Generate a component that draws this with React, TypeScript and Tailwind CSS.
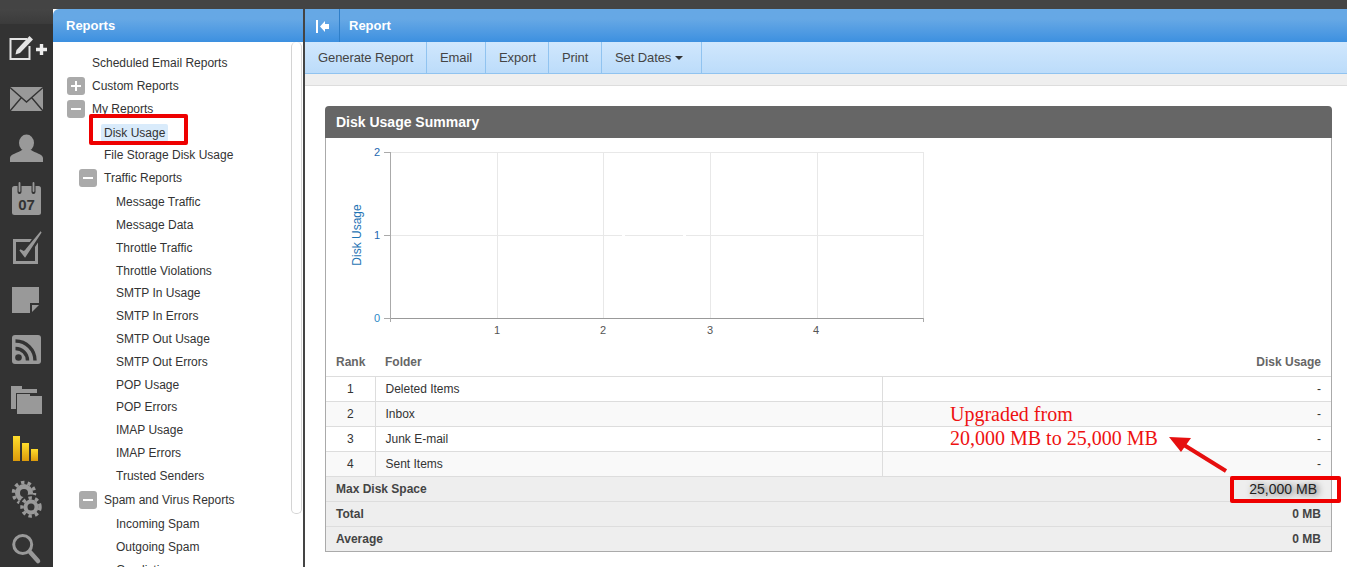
const railBg = "#333333";
const iconGray = "#999999";

const reportTree = [
  { label: "Scheduled Email Reports", level: 0 },
  { label: "Custom Reports", level: 0, toggle: "plus" },
  { label: "My Reports", level: 0, toggle: "minus" },
  { label: "Disk Usage", level: 1, active: true },
  { label: "File Storage Disk Usage", level: 1 },
  { label: "Traffic Reports", level: 1, toggle: "minus", gap: "mt-[1px]" },
  { label: "Message Traffic", level: 2, gap: "mt-[1px]" },
  { label: "Message Data", level: 2 },
  { label: "Throttle Traffic", level: 2 },
  { label: "Throttle Violations", level: 2 },
  { label: "SMTP In Usage", level: 2 },
  { label: "SMTP In Errors", level: 2 },
  { label: "SMTP Out Usage", level: 2 },
  { label: "SMTP Out Errors", level: 2 },
  { label: "POP Usage", level: 2 },
  { label: "POP Errors", level: 2 },
  { label: "IMAP Usage", level: 2 },
  { label: "IMAP Errors", level: 2 },
  { label: "Trusted Senders", level: 2 },
  { label: "Spam and Virus Reports", level: 1, toggle: "minus", gap: "mt-[1px]" },
  { label: "Incoming Spam", level: 2, gap: "mt-[2px]" },
  { label: "Outgoing Spam", level: 2 },
  { label: "Greylisting", level: 2 },
];

const levelClass = ["pl-[14px]", "pl-[26px]", "pl-[38px]"];

const toolbarItems = [
  { label: "Generate Report", width: "w-[122px]" },
  { label: "Email", width: "w-[59px]" },
  { label: "Export", width: "w-[63px]" },
  { label: "Print", width: "w-[53px]" },
  { label: "Set Dates", width: "w-[100px]", caret: true },
];

const folders = ["Deleted Items", "Inbox", "Junk E-mail", "Sent Items"];

function Slot({ children }: { children: React.ReactNode }) {
  return (
    <svg width="53" height="50" viewBox="0 0 53 50" className="block shrink-0">
      {children}
    </svg>
  );
}

function Gear({ x, y, r, hole }: { x: number; y: number; r: number; hole: number }) {
  return (
    <g>
      <circle cx={x} cy={y} r={r + 1.5} fill="none" stroke={iconGray} strokeWidth="3.5" strokeDasharray="3.4 3.2" />
      <circle cx={x} cy={y} r={r} fill={iconGray} />
      <circle cx={x} cy={y} r={hole} fill={railBg} />
    </g>
  );
}

function IconRail() {
  return (
    <div className="flex w-[53px] shrink-0 flex-col bg-[#333333]">
      <div className="h-[15px] shrink-0 bg-gradient-to-b from-[#454545] to-[#3b3b3b]" />
      <Slot>
        <path d="M27 15H10.5V35H29.5V22" fill="none" stroke="#e4e4e4" strokeWidth="2" />
        <path d="M29.5 12L33 15.5L20 29L15.5 30.5L16.5 26Z" fill="#e4e4e4" />
        <path d="M36 25.5H47M41.5 20V31" stroke="#eeeeee" strokeWidth="3.4" />
      </Slot>
      <Slot>
        <rect x="10" y="13" width="33" height="24" fill={iconGray} />
        <path d="M10 13.5L26.5 28L43 13.5M10 37L21 24M43 37L32 24" fill="none" stroke={railBg} strokeWidth="1.4" />
      </Slot>
      <Slot>
        <ellipse cx="26.5" cy="19" rx="7.5" ry="8.5" fill={iconGray} />
        <path d="M10 38V34C10 30 18 29 22 26H31C35 29 43 30 43 34V38Z" fill={iconGray} />
      </Slot>
      <Slot>
        <rect x="12" y="12" width="29" height="29" rx="2.5" fill={iconGray} />
        <path d="M19.5 9V18M33.5 9V18" stroke={railBg} strokeWidth="4" strokeLinecap="round" />
        <path d="M19.5 9V17M33.5 9V17" stroke={iconGray} strokeWidth="1.8" strokeLinecap="round" />
        <text x="26.5" y="36" textAnchor="middle" fontSize="15" fontWeight="700" fill={railBg}>
          07
        </text>
      </Slot>
      <Slot>
        <rect x="14.5" y="16.5" width="22" height="22" fill="none" stroke={iconGray} strokeWidth="3" />
        <path d="M21 26L25.5 31L40 9" fill="none" stroke={railBg} strokeWidth="7" />
        <path d="M20 26L25 32.5L41 8L26 26L24 28Z" fill={iconGray} stroke={iconGray} strokeWidth="1.5" />
      </Slot>
      <Slot>
        <path d="M12 13H39V29H30V39H12Z" fill={iconGray} />
        <path d="M32 31H39L32 38Z" fill={iconGray} />
      </Slot>
      <Slot>
        <rect x="12" y="11" width="29" height="29" rx="3" fill={iconGray} />
        <circle cx="18.5" cy="33.5" r="3.3" fill={railBg} />
        <path d="M15.5 24.5A12 12 0 0 1 27.5 36.5M15.5 17A19.5 19.5 0 0 1 35 36.5" fill="none" stroke={railBg} strokeWidth="3.4" />
      </Slot>
      <Slot>
        <path d="M11 12H22V15H37V19H16V35H11Z" fill={iconGray} />
        <path d="M17 20H30V22H42V40H17Z" fill={iconGray} />
      </Slot>
      <Slot>
        <defs>
          <linearGradient id="barFill" x1="0" y1="0" x2="0" y2="1">
            <stop offset="0" stopColor="#ffdd2c" />
            <stop offset="1" stopColor="#dc9a0b" />
          </linearGradient>
        </defs>
        <rect x="13" y="12" width="7" height="25" fill="url(#barFill)" />
        <rect x="22" y="19" width="7" height="18" fill="url(#barFill)" />
        <rect x="31" y="25" width="7" height="12" fill="url(#barFill)" />
      </Slot>
      <Slot>
        <Gear x={24} y={19} r={9} hole={4} />
        <circle cx="31" cy="33" r="12.5" fill={railBg} />
        <Gear x={31} y={33} r={7.5} hole={3.5} />
      </Slot>
      <Slot>
        <circle cx="22.7" cy="20.5" r="9" fill="none" stroke={iconGray} strokeWidth="3" />
        <path d="M30 28L38 37" stroke={iconGray} strokeWidth="4.5" strokeLinecap="round" />
      </Slot>
    </div>
  );
}

function Toggle({ kind }: { kind?: string }) {
  if (!kind) return <span className="mr-[7px] w-[18px] shrink-0" />;
  return (
    <span className="relative mr-[7px] h-[18px] w-[18px] shrink-0 rounded-[3px] bg-[#aaaaaa]">
      <span className="absolute left-[4px] top-[8px] h-[2px] w-[10px] bg-white" />
      {kind === "plus" ? <span className="absolute left-[8px] top-[4px] h-[10px] w-[2px] bg-white" /> : null}
    </span>
  );
}

function ReportsPanel() {
  return (
    <div className="relative flex w-[250px] shrink-0 flex-col overflow-hidden bg-white">
      <div className="flex h-[33px] shrink-0 items-center rounded-tl-[6px] bg-gradient-to-b from-[#66a8e5] from-30% to-[#3c90e0] pl-[13px] text-[13px] font-bold text-white">
        Reports
      </div>
      <div className="pt-[10px]">
        {reportTree.map((item) => (
          <div
            key={item.label}
            className={`flex h-[22.8px] items-center text-xs text-[#333333] ${levelClass[item.level]} ${item.gap ?? ""} ${item.active ? "pt-[2px]" : ""}`}
          >
            <Toggle kind={item.toggle} />
            {item.active ? (
              <span className="-mx-[3px] rounded-[2px] bg-[#d9ebfb] px-[3px] py-[2px] leading-[14px]">{item.label}</span>
            ) : (
              <span>{item.label}</span>
            )}
          </div>
        ))}
      </div>
      <div className="absolute right-[1px] top-[33px] h-[472px] w-[11px] rounded-[5px] border-x border-b border-[#d4d4d4] bg-white" />
    </div>
  );
}

function DiskChart() {
  const grid = [497.5, 603.5, 710.5, 817.5, 923.5];
  const labels = [
    { x: 497, text: "1" },
    { x: 603, text: "2" },
    { x: 710, text: "3" },
    { x: 816, text: "4" },
  ];
  return (
    <svg width="1005" height="212" viewBox="326 138 1005 212" className="block">
      {grid.map((x) => (
        <path key={x} d={`M${x} 152V318`} stroke="#e8e8e8" />
      ))}
      <path d="M390.5 152.5H923.5M390.5 235.5H923.5" stroke="#e8e8e8" />
      <path d="M622 235.5H625M683 235.5H686" stroke="#ffffff" />
      <path d="M390.5 152V318" stroke="#aaaaaa" />
      <path d="M384 152.5H390M384 235.5H390M384 318.5H390" stroke="#aaaaaa" />
      <path d="M390 318.5H923.5" stroke="#999999" />
      <path d="M923.5 318V322M390.5 318V322" stroke="#aaaaaa" />
      <text x="380" y="156" textAnchor="end" fontSize="11" fill="#2468b0">2</text>
      <text x="380" y="239" textAnchor="end" fontSize="11" fill="#2468b0">1</text>
      <text x="380" y="322" textAnchor="end" fontSize="11" fill="#2b88c8">0</text>
      {labels.map((l) => (
        <text key={l.text} x={l.x} y="334" textAnchor="middle" fontSize="11" fill="#555555">
          {l.text}
        </text>
      ))}
      <text transform="translate(361 235) rotate(-90)" textAnchor="middle" fontSize="12" fill="#1f74b4">
        Disk Usage
      </text>
    </svg>
  );
}

function SummaryCard() {
  return (
    <div className="w-[1007px]">
      <div className="flex h-[32px] items-center rounded-t-[4px] bg-[#666666] pl-[11px] text-sm font-bold text-white">
        Disk Usage Summary
      </div>
      <div className="border-x border-b border-[#aaaaaa]">
        <DiskChart />
        <table className="w-full table-fixed border-collapse text-xs">
          <colgroup>
            <col className="w-[49px]" />
            <col className="w-[507px]" />
            <col />
          </colgroup>
          <thead>
            <tr className="h-[26px] text-[#666666]">
              <th className="pb-[2px] pl-[10px] text-left font-bold">Rank</th>
              <th className="pb-[2px] pl-[10px] text-left font-bold">Folder</th>
              <th className="pb-[2px] pr-[10px] text-right font-bold">Disk Usage</th>
            </tr>
          </thead>
          <tbody className="text-[#333333]">
            {folders.map((name, i) => (
              <tr key={name} className={`h-[25px] border-t border-[#dddddd] ${i % 2 ? "bg-[#f9f9f9]" : "bg-white"}`}>
                <td className="border-r border-[#dddddd] text-center">{i + 1}</td>
                <td className="border-r border-[#dddddd] pl-[10px]">{name}</td>
                <td className="pr-[10px] text-right">-</td>
              </tr>
            ))}
            <tr className="h-[25px] border-t border-[#dddddd] bg-[#eeeeee]">
              <td colSpan={2} className="pl-[10px] font-bold text-[#444444]">Max Disk Space</td>
              <td className="pr-[14px] text-right text-sm text-[#222222] [text-shadow:2px_1px_6px_#444444]">25,000 MB</td>
            </tr>
            <tr className="h-[25px] border-t border-[#dddddd] bg-[#eeeeee] font-bold text-[#444444]">
              <td colSpan={2} className="pl-[10px]">Total</td>
              <td className="pr-[10px] text-right">0 MB</td>
            </tr>
            <tr className="h-[25px] border-t border-[#dddddd] bg-[#eeeeee] font-bold text-[#444444]">
              <td colSpan={2} className="pl-[10px]">Average</td>
              <td className="pr-[10px] text-right">0 MB</td>
            </tr>
          </tbody>
        </table>
      </div>
    </div>
  );
}

function ReportPane() {
  return (
    <div className="flex min-w-0 flex-1 flex-col bg-white">
      <div className="flex h-[33px] shrink-0 items-center bg-gradient-to-b from-[#66a8e5] from-30% to-[#3c90e0] text-[13px] font-bold text-white">
        <div className="flex h-full w-[35px] items-center border-r border-[#2f7fc9] pl-[11px]">
          <svg width="14" height="14" viewBox="0 0 14 14">
            <path d="M0 1H2V14H0ZM4 7.5L9 2V5H13V10H9V13Z" fill="#ffffff" />
          </svg>
        </div>
        <span className="pl-[9px]">Report</span>
      </div>
      <div className="flex h-[32px] shrink-0 border-b border-[#90c3f0] bg-gradient-to-b from-[#d0e7fd] to-[#bcdcfa]">
        {toolbarItems.map((item) => (
          <div
            key={item.label}
            className={`flex items-center border-r border-[#90c3f0] pl-[13px] text-[13px] tracking-[-0.1px] text-[#444444] ${item.width}`}
          >
            {item.label}
            {item.caret ? (
              <span className="ml-[4px] h-0 w-0 border-x-[4px] border-t-[4px] border-x-transparent border-t-[#333333]" />
            ) : null}
          </div>
        ))}
      </div>
      <div className="h-[12px] shrink-0 border-b border-[#dddddd] bg-[#efefef]" />
      <div className="pl-[20px] pt-[20px]">
        <SummaryCard />
      </div>
    </div>
  );
}

function Annotations() {
  return (
    <>
      <div className="absolute left-[89px] top-[114px] h-[31px] w-[99px] rounded-[2px] border-4 border-[#ee0000]" />
      <div className="absolute left-[1230px] top-[476px] h-[27px] w-[111px] rounded-[2px] border-4 border-[#ee0000]" />
      <div className="absolute left-[950px] top-[402px] text-[20px] leading-[24px] text-[#ee1111] [font-family:'Liberation_Serif',serif]">
        <div>Upgraded from</div>
        <div>20,000 MB to 25,000 MB</div>
      </div>
      <svg width="70" height="50" viewBox="1165 430 70 50" className="absolute left-[1165px] top-[430px]">
        <path d="M1169 437L1191 438L1181 452Z" fill="#e60f0f" />
        <path d="M1184 445L1226 471" stroke="#e60f0f" strokeWidth="4" />
      </svg>
    </>
  );
}

export default function App() {
  return (
    <div className="relative flex h-[567px] w-[1347px] flex-col overflow-hidden bg-[#333333] [font-family:'Liberation_Sans',Arial,sans-serif]">
      <div className="h-[9px] shrink-0 bg-[#444444]" />
      <div className="flex min-h-0 flex-1">
        <IconRail />
        <ReportsPanel />
        <div className="w-[2px] shrink-0 bg-[#444444]" />
        <ReportPane />
      </div>
      <Annotations />
    </div>
  );
}
